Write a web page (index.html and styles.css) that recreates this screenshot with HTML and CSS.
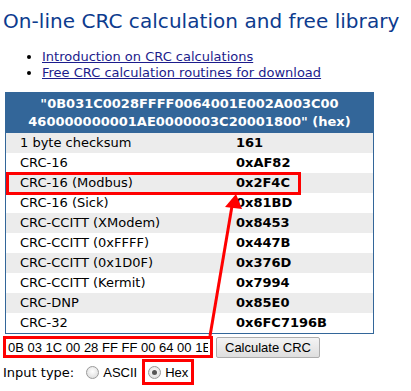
FILE: index.html
```html
<!DOCTYPE html>
<html>
<head>
<meta charset="utf-8">
<link rel="stylesheet" href="styles.css">
</head>
<body>
<h1 class="title">On-line CRC calculation and free library</h1>
<ul class="links">
  <li><a href="#">Introduction on CRC calculations</a></li>
  <li><a href="#">Free CRC calculation routines for download</a></li>
</ul>
<table class="results">
  <thead>
    <tr><th colspan="2">"0B031C0028FFFF0064001E002A003C00<br>460000000001AE0000003C20001800" (hex)</th></tr>
  </thead>
  <tbody>
    <tr><td class="name">1 byte checksum</td><td class="val">161</td></tr>
    <tr><td class="name">CRC-16</td><td class="val">0xAF82</td></tr>
    <tr><td class="name">CRC-16 (Modbus)</td><td class="val">0x2F4C</td></tr>
    <tr><td class="name">CRC-16 (Sick)</td><td class="val">0x81BD</td></tr>
    <tr><td class="name">CRC-CCITT (XModem)</td><td class="val">0x8453</td></tr>
    <tr><td class="name">CRC-CCITT (0xFFFF)</td><td class="val">0x447B</td></tr>
    <tr><td class="name">CRC-CCITT (0x1D0F)</td><td class="val">0x376D</td></tr>
    <tr><td class="name">CRC-CCITT (Kermit)</td><td class="val">0x7994</td></tr>
    <tr><td class="name">CRC-DNP</td><td class="val">0x85E0</td></tr>
    <tr><td class="name">CRC-32</td><td class="val">0x6FC7196B</td></tr>
  </tbody>
</table>
<div class="form-row">
  <input class="hex-input" type="text" value="0B 03 1C 00 28 FF FF 00 64 00 1E 00 2A 00 3C 00">
  <button class="calc" type="button">Calculate CRC</button>
</div>
<div class="type-row">
  <span class="label">Input type:</span>
  <label class="opt"><span class="radio"></span>ASCII</label>
  <label class="opt hex-opt"><span class="radio checked"></span>Hex</label>
</div>
<svg class="overlay" width="411" height="391" viewBox="0 0 411 391">
  <rect x="7.5" y="173.5" width="292" height="20" fill="none" stroke="#ff0000" stroke-width="3"/>
  <line x1="210" y1="336" x2="232" y2="206" stroke="#ff0000" stroke-width="3"/>
  <polygon points="236,194 242,209 225,207" fill="#ff0000"/>
</svg>
</body>
</html>
```
FILE: styles.css
```css
html, body {
  margin: 0;
  padding: 0;
  background: #ffffff;
}
body {
  position: relative;
  width: 411px;
  height: 391px;
  overflow: hidden;
  padding-left: 3px;
  box-sizing: border-box;
  font-family: "DejaVu Sans", Verdana, sans-serif;
  font-size: 13px;
  color: #000;
}
.title {
  margin: 8px 0 0 0;
  font-size: 20px;
  letter-spacing: 0.05px;
  white-space: nowrap;
  font-weight: normal;
  color: #0d3b8e;
  line-height: 26px;
}
.links {
  margin: 15px 0 0 0;
  padding-left: 39px;
  line-height: 16px;
}
.links a {
  color: #1c1c8c;
  text-decoration: underline;
}
.results {
  margin: 11px 0 0 2px;
  width: 369px;
  border-collapse: collapse;
  border: 1px solid #336699;
}
.results th {
  background: #336699;
  color: #ffffff;
  font-weight: bold;
  line-height: 18px;
  padding: 2px 0 2px 0;
  text-align: center;
}
.results td {
  height: 20px;
  padding: 0;
  line-height: 20px;
}
.results tbody tr:nth-child(odd) {
  background: #ececec;
}
.results .name {
  width: 208px;
  padding-left: 14px;
}
.results .val {
  font-weight: bold;
  padding-left: 8px;
}
.form-row {
  display: flex;
  align-items: center;
  gap: 3px;
  margin-top: 2px;
}
.hex-input {
  width: 210px;
  height: 22px;
  box-sizing: border-box;
  border: 3px solid #ff0000;
  padding: 0 2px;
  font-family: "Liberation Sans", Arial, sans-serif;
  font-size: 13px;
  margin: 0;
  outline: none;
}
.calc {
  height: 21px;
  padding: 0 8px;
  font-family: "Liberation Sans", Arial, sans-serif;
  font-size: 13px;
  background: linear-gradient(#f4f4f4, #dedede);
  border: 1px solid #adadad;
  border-radius: 2px;
  margin: 0;
}
.type-row {
  display: flex;
  align-items: center;
  margin-top: 2px;
  height: 24px;
}
.label {
  margin-right: 12px;
}
.opt {
  display: flex;
  align-items: center;
  gap: 4px;
  font-family: "Liberation Sans", Arial, sans-serif;
  font-size: 13px;
  margin-right: 5px;
}
.hex-opt {
  border: 3px solid #ff0000;
  padding: 1px 3px 1px 3px;
  height: 18px;
}
.radio {
  width: 11px;
  height: 11px;
  border-radius: 50%;
  border: 1px solid #9a9a9a;
  background: radial-gradient(circle at 50% 40%, #ffffff, #d6d6d6);
  display: inline-block;
  position: relative;
}
.radio.checked::after {
  content: "";
  position: absolute;
  left: 3px;
  top: 3px;
  width: 5px;
  height: 5px;
  border-radius: 50%;
  background: #555555;
}
.overlay {
  position: absolute;
  left: 0;
  top: 0;
  pointer-events: none;
}
```
